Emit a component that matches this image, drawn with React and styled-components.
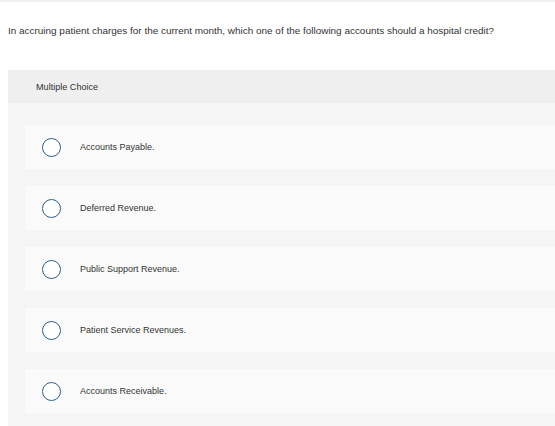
import React from "react";
import styled, { createGlobalStyle } from "styled-components";

const GlobalStyle = createGlobalStyle`
  html, body {
    margin: 0;
    padding: 0;
    background: #fff;
  }
  body {
    font-family: "Liberation Sans", Arial, sans-serif;
    color: #333;
  }
`;

const Page = styled.div`
  width: 555px;
  height: 426px;
  overflow: hidden;
  border-top: 2px solid #f0f0f0;
  box-sizing: border-box;
  padding-left: 8px;
`;

const Question = styled.p`
  margin: 0;
  padding-top: 22px;
  height: 46px;
  font-size: 9.95px;
  line-height: 14px;
  color: #333;
  white-space: nowrap;
`;

const Panel = styled.div`
  background: #f5f5f5;
  margin-right: -20px;
  padding-bottom: 14px;
`;

const PanelHeader = styled.div`
  background: #efefef;
  height: 33px;
  display: flex;
  align-items: center;
  padding-left: 28px;
  font-size: 9.1px;
  color: #333;
`;

const Options = styled.div`
  display: flex;
  flex-direction: column;
  gap: 17px;
  padding: 22px 0 0 17px;
`;

const Option = styled.label`
  display: flex;
  align-items: center;
  height: 44px;
  background: #fafafa;
  padding-left: 17px;
  font-size: 9px;
  color: #333;
  cursor: pointer;
`;

const Radio = styled.span`
  width: 17px;
  height: 17px;
  border: 1.5px solid #2f5d8c;
  border-radius: 50%;
  background: #fff;
  flex-shrink: 0;
  margin-right: 19px;
`;

const choices = [
  "Accounts Payable.",
  "Deferred Revenue.",
  "Public Support Revenue.",
  "Patient Service Revenues.",
  "Accounts Receivable.",
];

export default function App() {
  return (
    <>
      <GlobalStyle />
      <Page>
        <Question>
          In accruing patient charges for the current month, which one of the following accounts should a hospital credit?
        </Question>
        <Panel>
          <PanelHeader>Multiple Choice</PanelHeader>
          <Options>
            {choices.map((c) => (
              <Option key={c}>
                <Radio />
                {c}
              </Option>
            ))}
          </Options>
        </Panel>
      </Page>
    </>
  );
}
